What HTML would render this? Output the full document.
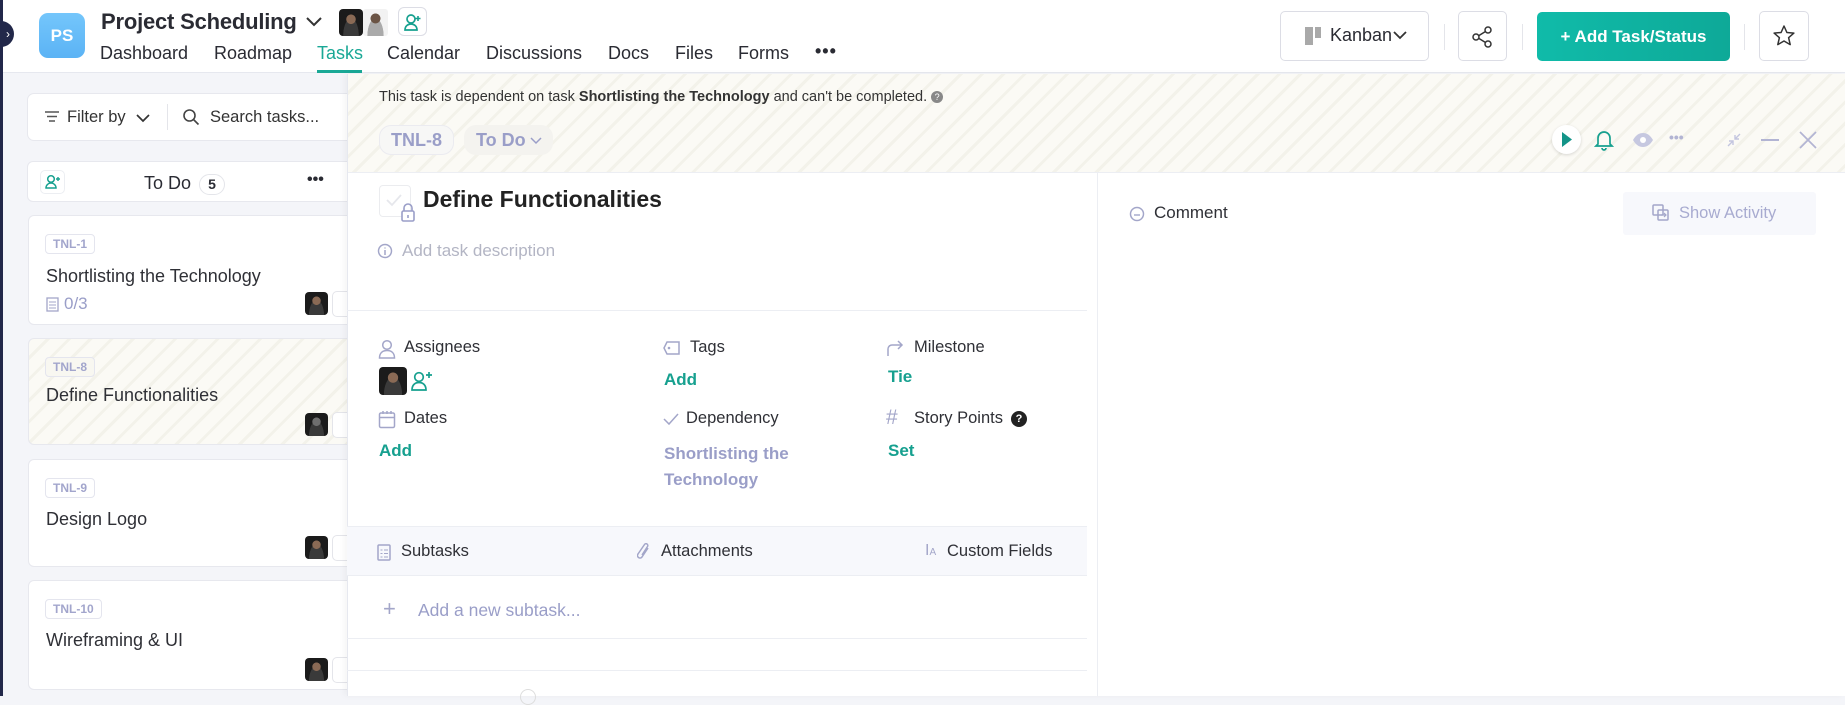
<!DOCTYPE html>
<html><head><meta charset="utf-8"><style>
*{box-sizing:border-box;margin:0;padding:0}
body{width:1845px;height:696px;overflow:hidden;background:#f4f5f9;font-family:"Liberation Sans",sans-serif;color:#2a2b33;position:relative}
.a{position:absolute}
.hdr{left:0;top:0;width:1845px;height:73px;background:#fff;border-bottom:1px solid #e6e8ef}
.nav{top:43px;font-size:18px;color:#2a2b33}
.btn{background:#fff;border:1px solid #dcdde5;border-radius:5px}
.av{background:radial-gradient(circle at 50% 38%,#8a6a55 0 22%,transparent 24%),radial-gradient(ellipse at 50% 100%,#3a3a3a 0 45%,transparent 47%),#1b1b1b;border-radius:4px}
.card{left:28px;width:330px;background:#fff;border:1px solid #e7e8ee;border-radius:6px}
.tag{left:16px;top:18px;border:1px solid #e4e5ee;border-radius:4px;font-size:12px;font-weight:bold;color:#a2a5cc;padding:2px 7px}
.ct{left:17px;font-size:18px;color:#2f3036}
.stripe{background:repeating-linear-gradient(135deg,#fbfaf5 0 12px,#f3f2ea 12px 15px)}
.lbl{font-size:16.5px;color:#2f3036}
.val{font-size:17px;font-weight:bold;color:#16a08f}
.ic{stroke:#a3a6c9;fill:none;stroke-width:1.5}
.ua{left:303px;width:26px;height:26px;border:1px solid #e4e5ea;border-radius:5px;background:#fff}
</style></head><body>
<div class="a hdr"></div>
<!-- left dark edge -->
<div class="a" style="left:0;top:0;width:3px;height:696px;background:#22284a"></div>
<div class="a" style="left:-12px;top:21px;width:26px;height:26px;border-radius:50%;background:#22284a;color:#fff;font-size:12px;line-height:26px;text-align:right;padding-right:4px">›</div>

<div class="a" style="left:39px;top:13px;width:46px;height:45px;border-radius:9px;background:linear-gradient(#74c6fb,#5bb3f5);color:#fff;font-weight:bold;font-size:17px;text-align:center;line-height:45px">PS</div>
<div class="a" style="left:101px;top:9px;font-size:22px;font-weight:bold;color:#2a2b33;letter-spacing:-0.2px">Project Scheduling</div>
<svg class="a" style="left:305px;top:16px" width="18" height="12"><path d="M2 2l7 7 7-7" stroke="#333" stroke-width="2" fill="none"/></svg>
<div class="a av" style="left:339px;top:9px;width:24px;height:27px"></div>
<div class="a" style="left:363px;top:9px;width:25px;height:27px;background:radial-gradient(circle at 50% 35%,#6b5445 0 22%,transparent 24%),radial-gradient(ellipse at 50% 100%,#aaa 0 45%,transparent 47%),#f2f2f2;border-radius:3px"></div>
<div class="a btn" style="left:398px;top:7px;width:29px;height:29px;border-radius:6px"></div>
<svg class="a" style="left:403px;top:12px" width="20" height="20"><circle cx="8" cy="7" r="4" stroke="#16a08f" stroke-width="1.7" fill="none"/><path d="M2 18c0-4 3-6 6-6s6 2 6 6z" stroke="#16a08f" stroke-width="1.7" fill="none"/><path d="M15 4v5M12.5 6.5h5" stroke="#16a08f" stroke-width="1.6"/></svg>

<div class="a nav" style="left:100px">Dashboard</div>
<div class="a nav" style="left:214px">Roadmap</div>
<div class="a nav" style="left:317px;color:#1aa896">Tasks</div>
<div class="a" style="left:317px;top:70px;width:45px;height:3px;background:#1aa896"></div>
<div class="a nav" style="left:387px">Calendar</div>
<div class="a nav" style="left:486px">Discussions</div>
<div class="a nav" style="left:608px">Docs</div>
<div class="a nav" style="left:675px">Files</div>
<div class="a nav" style="left:738px">Forms</div>
<div class="a nav" style="left:815px;font-weight:bold;letter-spacing:1px;top:41px">•••</div>

<div class="a btn" style="left:1280px;top:11px;width:149px;height:50px"></div>
<div class="a" style="left:1305px;top:27px;width:8px;height:18px;background:#a9a9a9"></div>
<div class="a" style="left:1315px;top:27px;width:6px;height:11px;background:#a9a9a9"></div>
<div class="a" style="left:1330px;top:25px;font-size:18px">Kanban</div>
<svg class="a" style="left:1393px;top:30px" width="14" height="10"><path d="M1 2l6 6 6-6" stroke="#333" stroke-width="1.8" fill="none"/></svg>
<div class="a" style="left:1444px;top:24px;width:1px;height:26px;background:#e4e5ea"></div>
<div class="a btn" style="left:1458px;top:11px;width:49px;height:50px"></div>
<svg class="a" style="left:1471px;top:25px" width="24" height="24"><circle cx="17" cy="5" r="3" stroke="#333" stroke-width="1.5" fill="none"/><circle cx="5" cy="12" r="3" stroke="#333" stroke-width="1.5" fill="none"/><circle cx="17" cy="19" r="3" stroke="#333" stroke-width="1.5" fill="none"/><path d="M8 10.5l6.5-4M8 13.5l6.5 4" stroke="#333" stroke-width="1.5"/></svg>
<div class="a" style="left:1522px;top:24px;width:1px;height:26px;background:#e4e5ea"></div>
<div class="a" style="left:1537px;top:12px;width:193px;height:49px;border-radius:5px;background:linear-gradient(90deg,#10bba9,#0ea998);color:#fff;font-weight:bold;font-size:17px;text-align:center;line-height:49px">+ Add Task/Status</div>
<div class="a" style="left:1744px;top:24px;width:1px;height:26px;background:#e4e5ea"></div>
<div class="a btn" style="left:1759px;top:11px;width:50px;height:50px"></div>
<svg class="a" style="left:1772px;top:24px" width="24" height="24"><path d="M12 2l2.9 6.5 7 .6-5.3 4.6 1.6 6.9L12 17l-6.2 3.6 1.6-6.9L2.1 9.1l7-.6z" stroke="#333" stroke-width="1.5" fill="none" stroke-linejoin="round"/></svg>

<!-- left column -->
<div class="a" style="left:27px;top:93px;width:330px;height:48px;background:#fff;border:1px solid #e7e8ee;border-radius:7px"></div>
<svg class="a" style="left:44px;top:109px" width="16" height="16"><path d="M1 3h14M3 7.5h10M5 12h6" stroke="#555" stroke-width="1.5"/></svg>
<div class="a" style="left:67px;top:108px;font-size:16.5px;color:#333">Filter by</div>
<svg class="a" style="left:136px;top:113px" width="14" height="10"><path d="M1 2l6 6 6-6" stroke="#333" stroke-width="1.7" fill="none"/></svg>
<div class="a" style="left:167px;top:104px;width:1px;height:26px;background:#e4e5ea"></div>
<svg class="a" style="left:182px;top:108px" width="18" height="18"><circle cx="7.5" cy="7.5" r="5.5" stroke="#444" stroke-width="1.6" fill="none"/><path d="M11.5 11.5l5 5" stroke="#444" stroke-width="1.6"/></svg>
<div class="a" style="left:210px;top:108px;font-size:16.5px;color:#333">Search tasks...</div>

<div class="a" style="left:27px;top:161px;width:330px;height:41px;background:#fff;border:1px solid #e7e8ee;border-radius:6px"></div>
<div class="a btn" style="left:40px;top:170px;width:25px;height:24px;border-color:#eceef2"></div>
<svg class="a" style="left:44px;top:173px" width="18" height="18"><circle cx="7" cy="6" r="3.3" stroke="#16a08f" stroke-width="1.5" fill="none"/><path d="M2 15c0-3 2.5-5 5-5s5 2 5 5z" stroke="#16a08f" stroke-width="1.5" fill="none"/><path d="M14 4v4M12 6h4" stroke="#16a08f" stroke-width="1.4"/></svg>
<div class="a" style="left:144px;top:173px;font-size:18px">To Do</div>
<div class="a" style="left:199px;top:174px;width:26px;height:21px;border:1px solid #e4e5ea;border-radius:11px;font-size:14px;font-weight:bold;text-align:center;line-height:19px">5</div>
<div class="a" style="left:307px;top:171px;font-weight:bold;font-size:16px">•••</div>

<div class="a card" style="top:215px;height:110px"><div class="a tag">TNL-1</div><div class="a ct" style="top:50px">Shortlisting the Technology</div>
<svg class="a" style="left:17px;top:81px" width="13" height="15"><rect x="1" y="1" width="11" height="13" stroke="#a3a6c9" fill="none" stroke-width="1.3"/><path d="M3 5h7M3 8h7M3 11h7" stroke="#a3a6c9" stroke-width="1"/></svg>
<div class="a" style="left:35px;top:78px;font-size:17px;color:#9a9ec8">0/3</div>
<div class="a av" style="left:276px;top:76px;width:23px;height:23px"></div><div class="a ua" style="top:75px"></div></div>
<div class="a card stripe" style="top:338px;height:107px"><div class="a tag" style="background:#f8f7f1">TNL-8</div><div class="a ct" style="top:46px">Define Functionalities</div><div class="a av" style="left:276px;top:74px;width:23px;height:23px;filter:grayscale(1)"></div><div class="a ua" style="top:73px"></div></div>
<div class="a card" style="top:459px;height:108px"><div class="a tag">TNL-9</div><div class="a ct" style="top:49px">Design Logo</div><div class="a av" style="left:276px;top:76px;width:23px;height:23px"></div><div class="a ua" style="top:75px"></div></div>
<div class="a card" style="top:580px;height:110px"><div class="a tag">TNL-10</div><div class="a ct" style="top:49px">Wireframing &amp; UI</div><div class="a av" style="left:276px;top:77px;width:23px;height:23px"></div><div class="a ua" style="top:76px"></div></div>

<!-- detail panel -->
<div class="a" style="left:347px;top:74px;width:1498px;height:622px;background:#fff;border-left:1px solid #e6e8ef;box-shadow:-3px 0 6px rgba(0,0,0,.04)"></div>
<div class="a stripe" style="left:348px;top:74px;width:1497px;height:99px;border-bottom:1px solid #eceef3"></div>
<div class="a" style="left:379px;top:89px;font-size:14.5px;color:#333">This task is dependent on task <b>Shortlisting the Technology</b> and can't be completed. <span style="display:inline-block;width:12px;height:12px;border-radius:50%;background:#888;color:#fff;font-size:9px;text-align:center;line-height:12px;vertical-align:1px">?</span></div>
<div class="a" style="left:379px;top:125px;width:75px;height:30px;border:1px solid #ebebf0;border-radius:12px;background:#f7f7f6;color:#9a9ec8;font-size:18px;font-weight:bold;text-align:center;line-height:28px">TNL-8</div>
<div class="a" style="left:464px;top:125px;width:89px;height:30px;border-radius:12px;background:#f4f3ef;color:#9a9ec8;font-size:18px;font-weight:bold;padding-left:12px;line-height:30px">To Do</div>
<svg class="a" style="left:530px;top:137px" width="12" height="8"><path d="M1 1l5 5 5-5" stroke="#9a9ec8" stroke-width="1.5" fill="none"/></svg>
<div class="a" style="left:1552px;top:125px;width:29px;height:29px;border-radius:50%;background:#fff;box-shadow:0 1px 3px rgba(0,0,0,.15)"></div>
<svg class="a" style="left:1561px;top:131px" width="12" height="17"><path d="M1 1l10 7.5L1 16z" fill="#139488"/></svg>
<svg class="a" style="left:1594px;top:129px" width="20" height="22"><path d="M4 15V9a6 6 0 0112 0v6l2 2H2z M8 19a2 2 0 004 0" stroke="#16a08f" stroke-width="1.7" fill="none"/></svg>
<svg class="a" style="left:1632px;top:132px" width="22" height="16"><path d="M1 8c3-5 6-7 10-7s7 2 10 7c-3 5-6 7-10 7S4 13 1 8z" fill="#c6c8e0"/><circle cx="11" cy="8" r="3" fill="#fff"/></svg>
<div class="a" style="left:1669px;top:129px;color:#b2b4d3;font-weight:bold;font-size:14px">•••</div>
<svg class="a" style="left:1727px;top:133px" width="14" height="14"><path d="M13 1L8 6M1 13l5-5M8 2v4h4M2 8h4v4" stroke="#c3c5df" stroke-width="1.4" fill="none"/></svg>
<div class="a" style="left:1761px;top:139px;width:18px;height:2px;background:#b2b4d3"></div>
<svg class="a" style="left:1799px;top:131px" width="18" height="18"><path d="M1 1l16 16M17 1L1 17" stroke="#b2b4d3" stroke-width="1.7"/></svg>

<div class="a" style="left:1097px;top:173px;width:1px;height:523px;background:#eceef3"></div>
<div class="a" style="left:379px;top:185px;width:32px;height:32px;border:1px solid #ebecef;border-radius:4px"></div>
<svg class="a" style="left:386px;top:193px" width="16" height="14"><path d="M1 7l5 5 9-10" stroke="#e6e7ec" stroke-width="1.8" fill="none"/></svg>
<svg class="a" style="left:400px;top:203px" width="16" height="20"><path d="M4 8V5a4 4 0 018 0v3" stroke="#9a9ec8" stroke-width="1.6" fill="none"/><rect x="2" y="8" width="12" height="10" rx="1.5" stroke="#9a9ec8" stroke-width="1.6" fill="#fff"/><path d="M8 12v3" stroke="#9a9ec8" stroke-width="1.6"/></svg>
<div class="a" style="left:423px;top:186px;font-size:23px;font-weight:bold;color:#222">Define Functionalities</div>
<svg class="a" style="left:377px;top:243px" width="16" height="16"><circle cx="8" cy="8" r="6.5" class="ic"/><path d="M8 7v5M8 4.5v1" stroke="#a3a6c9" stroke-width="1.5"/></svg>
<div class="a" style="left:402px;top:241px;font-size:17px;color:#b3b5c4">Add task description</div>
<div class="a" style="left:347px;top:310px;width:740px;height:1px;background:#eceef3"></div>

<svg class="a" style="left:378px;top:339px" width="18" height="20"><circle cx="9" cy="6" r="4.3" class="ic"/><path d="M1.5 19c0-5 3-7.5 7.5-7.5s7.5 2.5 7.5 7.5z" class="ic"/></svg>
<div class="a lbl" style="left:404px;top:338px">Assignees</div>
<div class="a av" style="left:379px;top:367px;width:28px;height:28px"></div>
<svg class="a" style="left:410px;top:369px" width="24" height="24"><circle cx="9" cy="8" r="4.3" stroke="#16a08f" stroke-width="1.7" fill="none"/><path d="M2 21c0-5 3-7.5 7-7.5s7 2.5 7 7.5z" stroke="#16a08f" stroke-width="1.7" fill="none"/><path d="M19 3v6M16 6h6" stroke="#16a08f" stroke-width="1.7"/></svg>
<svg class="a" style="left:663px;top:340px" width="18" height="16"><path d="M4 2h12v12H4L1 8z" class="ic"/><circle cx="6" cy="8" r="1.3" fill="#a3a6c9"/></svg>
<div class="a lbl" style="left:690px;top:338px">Tags</div>
<div class="a val" style="left:664px;top:370px">Add</div>
<svg class="a" style="left:886px;top:339px" width="18" height="18"><path d="M2 17V10a4 4 0 014-4h10M12 2l4 4-4 4" class="ic"/></svg>
<div class="a lbl" style="left:914px;top:338px">Milestone</div>
<div class="a val" style="left:888px;top:367px">Tie</div>

<svg class="a" style="left:378px;top:410px" width="18" height="19"><rect x="1.5" y="3" width="15" height="14.5" rx="1.5" class="ic"/><path d="M1.5 7.5h15M5 1v3M9 1v3M13 1v3" class="ic"/></svg>
<div class="a lbl" style="left:404px;top:409px">Dates</div>
<div class="a val" style="left:379px;top:441px">Add</div>
<svg class="a" style="left:663px;top:413px" width="16" height="13"><path d="M1 6l5 5 9-10" class="ic"/></svg>
<div class="a lbl" style="left:686px;top:409px">Dependency</div>
<div class="a val" style="left:664px;top:441px;color:#9a9ec8;line-height:26px">Shortlisting the<br>Technology</div>
<div class="a" style="left:886px;top:406px;font-size:21px;color:#a3a6c9">#</div>
<div class="a lbl" style="left:914px;top:409px">Story Points</div>
<div class="a" style="left:1011px;top:411px;width:16px;height:16px;border-radius:50%;background:#222;color:#fff;font-size:11px;font-weight:bold;text-align:center;line-height:16px">?</div>
<div class="a val" style="left:888px;top:441px">Set</div>

<div class="a" style="left:347px;top:526px;width:740px;height:50px;background:#f7f8fc;border-top:1px solid #eceef3;border-bottom:1px solid #eceef3"></div>
<svg class="a" style="left:377px;top:543px" width="14" height="18"><rect x="1" y="2" width="12" height="15" rx="1" class="ic"/><path d="M3.5 7h2M7 7h4M3.5 10.5h2M7 10.5h4M3.5 14h2M7 14h4" stroke="#a3a6c9" stroke-width="1"/></svg>
<div class="a lbl" style="left:401px;top:542px">Subtasks</div>
<svg class="a" style="left:637px;top:543px" width="14" height="19"><path d="M11 5l-6 9a2.5 2.5 0 01-4-3l6.5-9.5a1.8 1.8 0 013 2L5 12" class="ic"/></svg>
<div class="a lbl" style="left:661px;top:542px">Attachments</div>
<div class="a" style="left:925px;top:542px;font-size:16px;color:#a3a6c9">I<span style="font-size:10px">A</span></div>
<div class="a lbl" style="left:947px;top:542px">Custom Fields</div>
<div class="a" style="left:383px;top:596px;font-size:22px;color:#a3a6c9;font-weight:300">+</div>
<div class="a" style="left:418px;top:600px;font-size:17.5px;color:#9a9ec8">Add a new subtask...</div>
<div class="a" style="left:347px;top:638px;width:740px;height:1px;background:#eceef3"></div>
<div class="a" style="left:347px;top:670px;width:740px;height:1px;background:#eceef3"></div>
<div class="a" style="left:520px;top:689px;width:16px;height:16px;border:1px solid #ddd;border-radius:50%"></div>

<svg class="a" style="left:1129px;top:206px" width="16" height="16"><circle cx="8" cy="8" r="6.5" class="ic"/><path d="M5 9h6" stroke="#a3a6c9" stroke-width="1.4"/></svg>
<div class="a lbl" style="left:1154px;top:203px;font-size:17px">Comment</div>
<div class="a" style="left:1623px;top:192px;width:193px;height:43px;background:#f7f8fc;border-radius:3px"></div>
<svg class="a" style="left:1652px;top:204px" width="18" height="18"><rect x="1" y="1" width="10" height="10" rx="1" class="ic"/><rect x="6" y="6" width="10" height="10" rx="1" class="ic" fill="#f7f8fc"/><path d="M9 11h5M12 9l2 2-2 2" stroke="#a3a6c9" stroke-width="1.2" fill="none"/></svg>
<div class="a" style="left:1679px;top:204px;font-size:16.5px;color:#a8abd0">Show Activity</div>
</body></html>
